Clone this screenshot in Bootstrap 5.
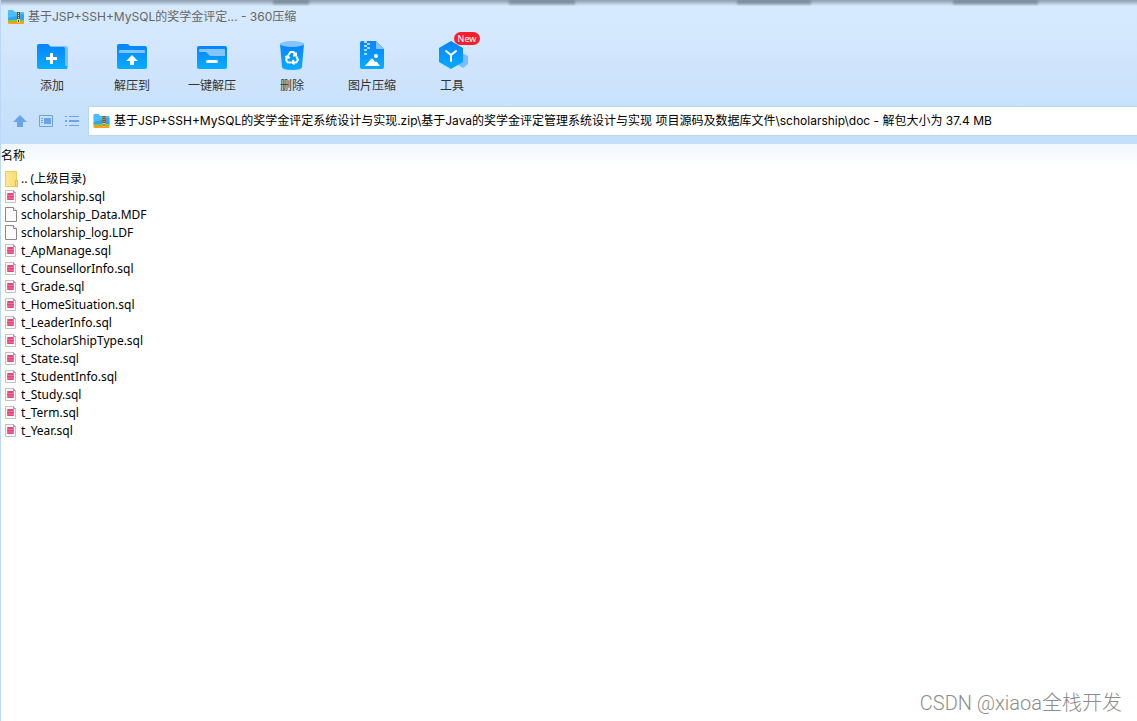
<!DOCTYPE html>
<html lang="zh-CN">
<head>
<meta charset="utf-8">
<meta name="viewport" content="width=device-width, initial-scale=1">
<title>360压缩</title>
<link href="https://cdn.jsdelivr.net/npm/bootstrap@5.3.0/dist/css/bootstrap.min.css" rel="stylesheet">
<style>
body{font:12px/18px "Noto Sans","Noto Sans CJK SC",sans-serif;color:#000;background:#fff}
.app-window{border-left:1px solid #bbd8f8}
.app-head{background:linear-gradient(#d7ebff,#d2e6fd 50px,#c3dffa 140px);height:144px}
.top-shade{height:6px;background:linear-gradient(#94a5b7 0 1px,#a5b5c6 2px,#d7ebff00)}
.top-shade i{position:absolute;top:0;height:6px;background:linear-gradient(#6c7c8e,#7e8fa1 2px,#d7ebff00);filter:blur(1px)}
.title-text{color:#666;font-family:Inter,"Noto Sans CJK SC",sans-serif}
.title-row{height:22px;padding-left:7px}
.tools{height:74px;padding-left:11px}
.tool{width:80px;padding:6px 0 0;border:0;background:none;color:#333;line-height:18px}
.tool svg{width:32px;height:32px;margin-bottom:7px;overflow:visible}
.new-tag{left:42px;top:0;width:26px;height:13px;font-size:9px;line-height:13px;background:#fa1e2d;color:#fff;border-radius:7px}
.nav-tools{padding-left:2px}
.nav-tool{width:26px;height:28px;padding:0;border:0;background:none}
.address{height:30px;margin-left:3px;border:1px solid #b8d7f5;border-right:0}
.address input{font-family:Inter,"Noto Sans CJK SC",sans-serif;font-size:12px;color:#000;outline:0}
.file-list thead th{height:24px;padding:0;font-weight:400;line-height:24px}
.head-fade{background:linear-gradient(#f0f7fe,#fff)}
.file-list td{height:18px;padding:0 0 0 2px;line-height:18px}
.file-list tr:first-child td{padding-top:2px}
.file-list a{color:#000}
.file-list svg{width:16px;height:18px;margin-right:2px}
.watermark{right:15px;bottom:4px;font:20px/28px Roboto,"Noto Sans CJK SC",sans-serif;color:#8c8c8c;font-weight:300}
</style>
</head>
<body>
<svg width="0" height="0" class="position-absolute" aria-hidden="true">
<defs>
<linearGradient id="blue" x2="0" y2="1"><stop stop-color="#0783ff"/><stop offset="1" stop-color="#06adff"/></linearGradient>
<linearGradient id="gold"><stop stop-color="#ffe98f"/><stop offset="1" stop-color="#fbd977"/></linearGradient>
<symbol id="zip" viewBox="0 0 16 14"><path fill="#48bdf8" d="M0 1q0-1 1-1h4l2 2h8q1 0 1 1v8H0z"/><path fill="#188de0" d="M0 8l16-4v6H0z" opacity=".5"/><path fill="#8bc53f" d="M0 10h16v2H0z"/><path fill="#ff9d16" d="M0 12h16v1q0 1-1 1H1q-1 0-1-1z"/><path fill="#8a4a1f" d="M9 2h3v11H9z"/><path fill="#ffd36a" d="M10 3h1v1h-1zm0 2h1v1h-1zm0 2h1v1h-1zM9 9h3v4H9z"/><path fill="#693411" d="M10 10h1v2h-1z"/></symbol>
<symbol id="up-folder" viewBox="0 0 16 18"><path fill="url(#gold)" stroke="#efca59" d="M2.500 1.500h11v9h1v6h-12z"/><path fill="none" stroke="#e9bd43" d="M12.500 16v-5.500h2v6h-2"/></symbol>
<symbol id="sql" viewBox="0 0 16 18"><path fill="#fafafa" stroke="#c2c2c2" d="M2.500 2.500h8l2 2v10h-10z"/><path fill="none" stroke="#999" d="M10.500 2.500v2h2"/><g fill="#e8447b"><rect x="4" y="5" width="7" height="2" rx="1"/><rect x="4" y="7" width="7" height="3" rx="1"/><rect x="4" y="10" width="7" height="2" rx="1"/></g><path stroke="#f7a7c2" d="M5 7.500h5M5 10h5" stroke-width=".5"/></symbol>
<symbol id="doc" viewBox="0 0 16 18"><path fill="#fafafa" stroke="#888" d="M2.500 1.500h8l3 3v11h-11z"/><path fill="#fff" stroke="#888" d="M10.500 1.500v3h3"/></symbol>
</defs>
</svg>
<div class="app-window min-vh-100 position-relative">
<header class="app-head">
<div class="top-shade position-relative overflow-hidden"><i style="left:23.9%;width:3.2%"></i><i style="left:44.7%;width:5.8%"></i><i style="left:64.8%;width:6.5%"></i><i style="left:83.8%;width:7.5%"></i></div>
<div class="title-row d-flex align-items-center"><svg class="me-1 flex-shrink-0" width="16" height="14" aria-hidden="true"><use href="#zip"/></svg><span class="title-text text-truncate">基于JSP+SSH+MySQL的奖学金评定... - 360压缩</span></div>
<div class="tools d-flex align-items-start pt-1">
<button class="tool" type="button"><svg class="d-block mx-auto" viewBox="0 0 32 32"><path fill="#76bfff" d="M15 8h14q3 0 3 3v16q0 2-2 2H15z"/><path fill="url(#blue)" d="M1 8q0-2 2-2h8q2 0 2 1l2 2h12q2 0 2 2v16q0 2 3 1l-1 3H3q-2 0-2-2z"/><path stroke="#fff" stroke-width="3" d="M10 20.500h11M15.500 15v11"/></svg>添加</button>
<button class="tool" type="button"><svg class="d-block mx-auto" viewBox="0 0 32 32"><path fill="url(#blue)" d="M1 8q0-2 2-2h8q2 0 3 2h15q2 0 2 2v19q0 2-2 2H3q-2 0-2-2z"/><path fill="#84c4ff" d="M3 15v-2q0-1 1-1h24q1 0 1 1v2z"/><path fill="#fff" d="M16 17l6 6h-4v4h-4v-4h-4z"/></svg>解压到</button>
<button class="tool" type="button"><svg class="d-block mx-auto" viewBox="0 0 32 32"><rect x="1" y="8" width="30" height="23" rx="2" fill="url(#blue)"/><path fill="#84c4ff" d="M3 14v-2q0-1 1-1h24q1 0 1 1v6H15q-2 0-3-2l-2-2H3z"/><path stroke="#fff" stroke-width="3" stroke-linecap="round" d="M11.500 23.500h9"/></svg>一键解压</button>
<button class="tool" type="button"><svg class="d-block mx-auto" viewBox="0 0 32 32"><path fill="url(#blue)" d="M4 6h24l-2 23q0 3-10 3T6 29z"/><ellipse cx="16" cy="6" rx="12" ry="3" fill="#84c4ff"/><g fill="none" stroke="#fff" stroke-width="2"><path id="re" d="M12.500 17l2-3h3l2 3m.5-2.500v3h-3"/><use href="#re" transform="rotate(120 16 20)"/><use href="#re" transform="rotate(240 16 20)"/></g></svg>删除</button>
<button class="tool" type="button"><svg class="d-block mx-auto" viewBox="0 0 32 32"><path fill="url(#blue)" d="M4 5q0-2 2-2h14l8 8v18q0 2-2 2H6q-2 0-2-2z"/><path fill="#84c4ff" d="M20 3l8 8h-8z"/><path fill="#a9d9ff" d="M8 3h3v2H8zm3 2h3v2h-3zM8 7h3v2H8zm3 2h3v2h-3zM8 11h3v2H8zm0 4h3v2H8z"/><circle cx="20" cy="18" r="2" fill="#fff"/><path fill="#fff" d="M9 28l6-7q1-1 2 0l2 3q1-1 2 0l3 4z"/></svg>图片压缩</button>
<button class="tool position-relative" type="button"><svg class="d-block mx-auto" viewBox="0 0 32 32"><path fill="#78bdff" d="M23 18l5-2 4 2v8l-5 4-5-3z"/><path fill="url(#blue)" d="M15 3l12 7v14l-12 7-12-7V10z"/><path fill="none" stroke="#fff" stroke-width="2" stroke-linecap="round" d="M10 13l5 4 5-4m-5 4v6"/></svg>工具<span class="new-tag position-absolute">New</span></button>
</div>
<div class="d-flex align-items-start ps-1 pt-1">
<div class="nav-tools d-flex">
<button class="nav-tool" type="button" aria-label="向上"><svg width="14" height="14" viewBox="0 0 14 14"><path fill="#6ba2ec" d="M7 1l7 7h-4v5H4V8H0z"/></svg></button>
<button class="nav-tool" type="button" aria-label="视图"><svg width="14" height="14" viewBox="0 0 14 14"><path fill="none" stroke="#6ba2ec" d="M.5 1.500h13v11H.5z"/><path fill="#6ba2ec" d="M5 4h7v6H5zM2 4h2v1H2zm0 2h2v1H2zm0 2h2v1H2z"/></svg></button>
<button class="nav-tool" type="button" aria-label="列表"><svg width="14" height="14" viewBox="0 0 14 14"><path fill="#6ba2ec" d="M0 2h2v1H0zm4 0h10v1H4zM0 6h2v2H0zm4 0h10v2H4zM0 11h2v1H0zm4 0h10v1H4z"/></svg></button>
</div>
<div class="address bg-white d-flex align-items-center flex-fill ps-1"><svg class="flex-shrink-0" width="17" height="14" aria-hidden="true"><use href="#zip"/></svg><input class="border-0 bg-transparent flex-fill p-0 ms-1" type="text" aria-label="路径" value="基于JSP+SSH+MySQL的奖学金评定系统设计与实现.zip\基于Java的奖学金评定管理系统设计与实现 项目源码及数据库文件\scholarship\doc - 解包大小为 37.4 MB"></div>
</div>
</header>
<main>
<table class="file-list w-100">
<thead class="head-fade"><tr><th scope="col">名称</th></tr></thead>
<tbody>
<tr><td><a class="d-flex text-decoration-none" href="#"><svg><use href="#up-folder"/></svg>.. (上级目录)</a></td></tr>
<tr><td><a class="d-flex text-decoration-none" href="#"><svg><use href="#sql"/></svg>scholarship.sql</a></td></tr>
<tr><td><a class="d-flex text-decoration-none" href="#"><svg><use href="#doc"/></svg>scholarship_Data.MDF</a></td></tr>
<tr><td><a class="d-flex text-decoration-none" href="#"><svg><use href="#doc"/></svg>scholarship_log.LDF</a></td></tr>
<tr><td><a class="d-flex text-decoration-none" href="#"><svg><use href="#sql"/></svg>t_ApManage.sql</a></td></tr>
<tr><td><a class="d-flex text-decoration-none" href="#"><svg><use href="#sql"/></svg>t_CounsellorInfo.sql</a></td></tr>
<tr><td><a class="d-flex text-decoration-none" href="#"><svg><use href="#sql"/></svg>t_Grade.sql</a></td></tr>
<tr><td><a class="d-flex text-decoration-none" href="#"><svg><use href="#sql"/></svg>t_HomeSituation.sql</a></td></tr>
<tr><td><a class="d-flex text-decoration-none" href="#"><svg><use href="#sql"/></svg>t_LeaderInfo.sql</a></td></tr>
<tr><td><a class="d-flex text-decoration-none" href="#"><svg><use href="#sql"/></svg>t_ScholarShipType.sql</a></td></tr>
<tr><td><a class="d-flex text-decoration-none" href="#"><svg><use href="#sql"/></svg>t_State.sql</a></td></tr>
<tr><td><a class="d-flex text-decoration-none" href="#"><svg><use href="#sql"/></svg>t_StudentInfo.sql</a></td></tr>
<tr><td><a class="d-flex text-decoration-none" href="#"><svg><use href="#sql"/></svg>t_Study.sql</a></td></tr>
<tr><td><a class="d-flex text-decoration-none" href="#"><svg><use href="#sql"/></svg>t_Term.sql</a></td></tr>
<tr><td><a class="d-flex text-decoration-none" href="#"><svg><use href="#sql"/></svg>t_Year.sql</a></td></tr>
</tbody>
</table>
</main>
<div class="watermark position-absolute">CSDN @xiaoa全栈开发</div>
</div>
<script src="https://cdn.jsdelivr.net/npm/bootstrap@5.3.0/dist/js/bootstrap.bundle.min.js"></script>
</body>
</html>
